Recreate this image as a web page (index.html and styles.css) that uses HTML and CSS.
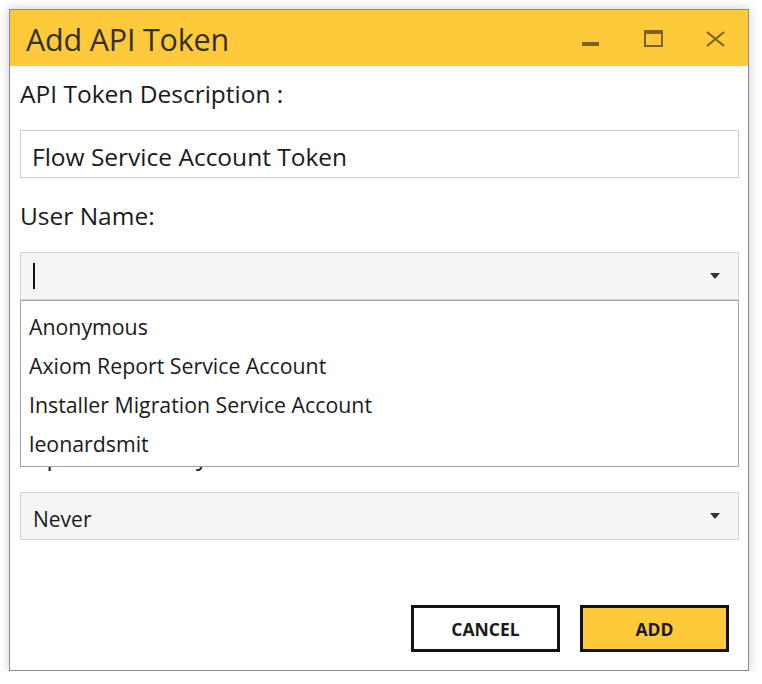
FILE: index.html
```html
<!DOCTYPE html>
<html>
<head>
<meta charset="utf-8">
<link rel="stylesheet" href="styles.css">
</head>
<body>
<div class="window">
  <div class="titlebar">
    <div class="title">Add API Token</div>
    <div class="controls">
      <svg class="ctl" width="20" height="20" viewBox="0 0 20 20"><rect x="0" y="13" width="17" height="4" fill="#7b6322"/></svg>
      <svg class="ctl" width="20" height="20" viewBox="0 0 20 20"><path d="M0 1h19v17H0z M2 5v11h15V5z" fill="#7b6322" fill-rule="evenodd"/></svg>
      <svg class="ctl" width="20" height="20" viewBox="0 0 20 20"><path d="M1 3L18 17M18 3L1 17" stroke="#7b6322" stroke-width="2.2" fill="none"/></svg>
    </div>
  </div>
  <div class="content">
    <div class="label first">API Token Description :</div>
    <div class="field text">Flow Service Account Token</div>
    <div class="label">User Name:</div>
    <div class="combo-wrap">
      <div class="field select"><span class="caret"></span><span class="arrow"></span></div>
      <div class="popup">
        <div class="item">Anonymous</div>
        <div class="item">Axiom Report Service Account</div>
        <div class="item">Installer Migration Service Account</div>
        <div class="item">leonardsmit</div>
      </div>
    </div>
    <div class="label hidden-gap">Expiration Policy:</div>
    <div class="field select"><span class="value">Never</span><span class="arrow"></span></div>
    <div class="buttons">
      <button class="btn cancel">CANCEL</button>
      <button class="btn add">ADD</button>
    </div>
  </div>
</div>
</body>
</html>
```
FILE: styles.css
```css
html, body {
  margin: 0;
  padding: 0;
  background: #ffffff;
}
body {
  font-family: "Open Sans", "Noto Sans", sans-serif;
  color: #1a1a1a;
}
.window {
  margin: 9px 0 0 9px;
  width: 738px;
  height: 660px;
  border: 1px solid #8c8c8c;
  box-shadow: 0 0 9px rgba(0,0,0,0.22);
  background: #fff;
  display: flex;
  flex-direction: column;
}
.titlebar {
  height: 56px;
  background: #ffc93c;
  display: flex;
  align-items: center;
  justify-content: space-between;
}
.title {
  font-size: 30.5px;
  color: #333027;
  padding-left: 16px;
  padding-top: 2px;
  letter-spacing: -0.2px;
}
.controls {
  display: flex;
  gap: 42px;
  padding-right: 22px;
  align-items: center;
  padding-top: 2px;
}
.ctl { display: block; }
.content {
  flex: 1;
  padding: 0 9px 0 10px;
  display: flex;
  flex-direction: column;
}
.label {
  font-size: 24.5px;
  line-height: 30px;
  margin-top: 23px;
  margin-bottom: 21px;
}
.label.first { margin-top: 13px; }
.label.hidden-gap { margin-top: 141px; }
.field {
  height: 48px;
  box-sizing: border-box;
  border: 1px solid #cfcfcf;
  display: flex;
  align-items: center;
  padding: 0 11px;
  font-size: 24.5px;
}
.field.text {
  background: #fff;
  padding-top: 4px;
}
.field.select {
  background: #f5f5f5;
  border-color: #d6d6d6;
  justify-content: space-between;
  padding-left: 12px;
  padding-right: 18px;
}
.caret {
  width: 2px;
  height: 26px;
  background: #111;
}
.arrow {
  width: 0;
  height: 0;
  border-left: 5px solid transparent;
  border-right: 5px solid transparent;
  border-top: 6px solid #333;
}
.value {
  font-size: 21px;
  margin-top: 6px;
}
.combo-wrap { position: relative; }
.popup {
  position: absolute;
  left: 0;
  right: 0;
  top: 48px;
  background: #fff;
  border: 1px solid #a8a49c;
  padding: 6px 0 3px 0;
  z-index: 2;
}
.item {
  font-size: 21.3px;
  line-height: 39px;
  padding-left: 8px;
  color: #1a1a1a;
}
.buttons {
  margin-top: auto;
  margin-bottom: 18px;
  display: flex;
  justify-content: flex-end;
  gap: 20px;
  padding-right: 10px;
}
.btn {
  width: 149px;
  height: 47px;
  box-sizing: border-box;
  border: 3px solid #111;
  font-family: "Open Sans", "Noto Sans", sans-serif;
  font-weight: 700;
  font-size: 17.5px;
  color: #1a1a1a;
  cursor: pointer;
  padding: 0;
}
.btn.cancel { background: #fff; }
.btn.add { background: #ffc93c; }
```
